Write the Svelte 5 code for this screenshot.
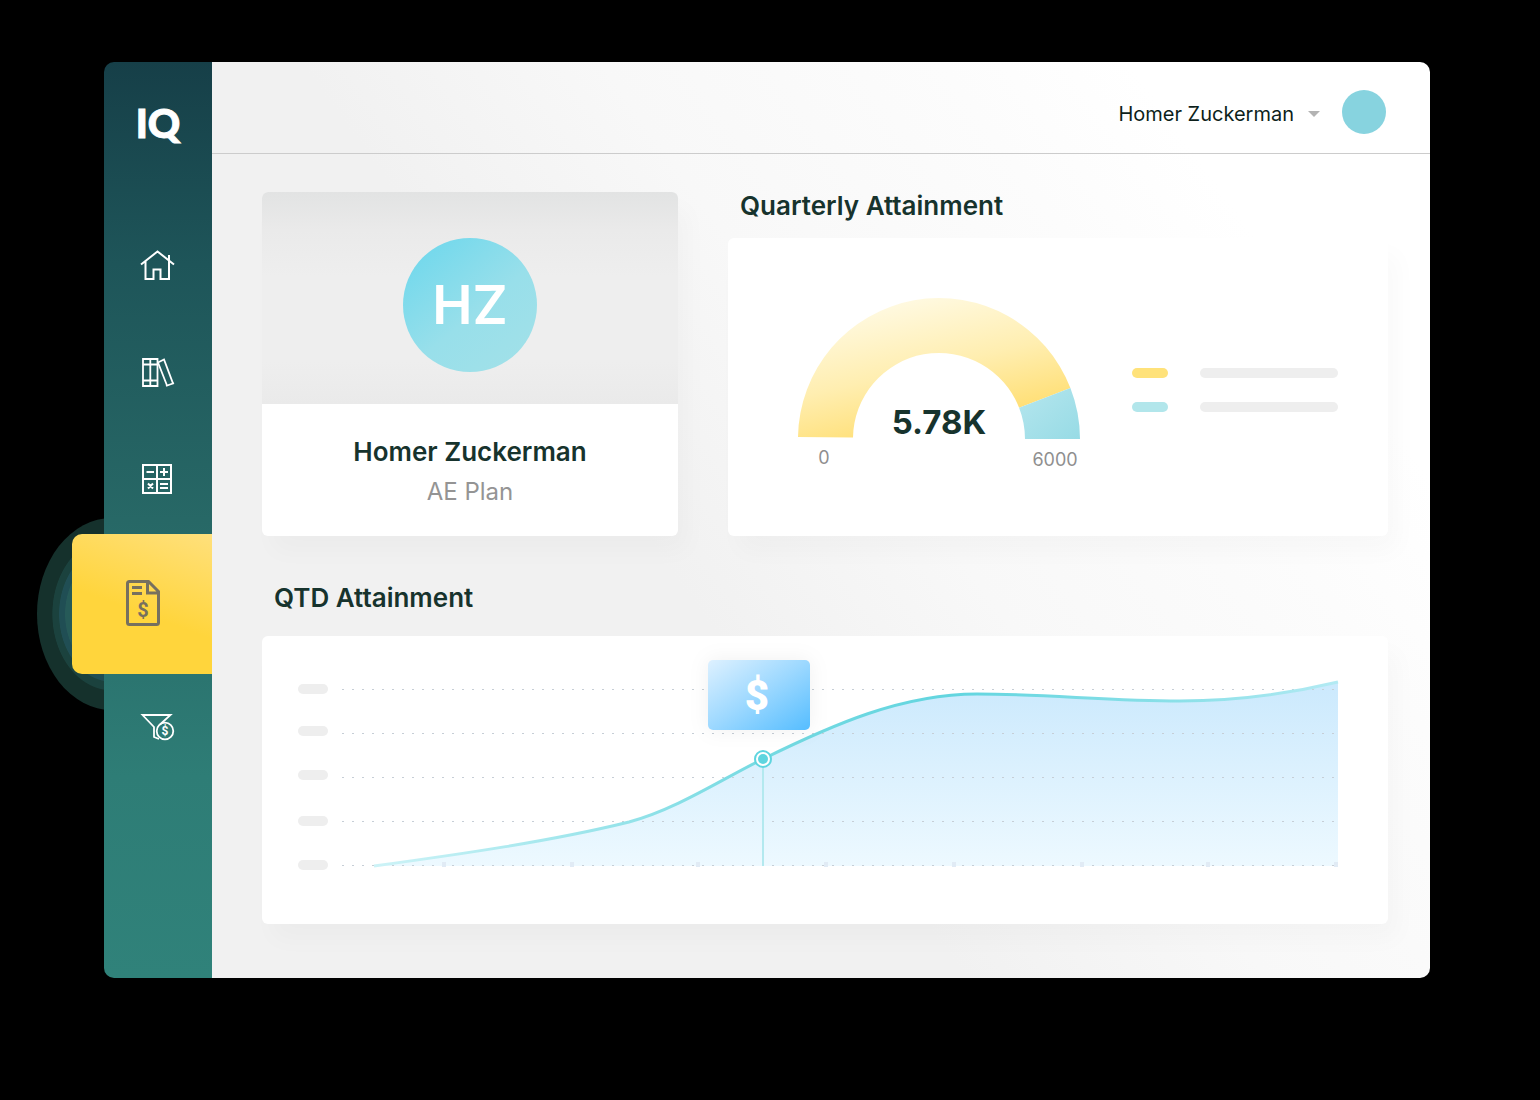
<script lang="ts">
    type Segment = { name: string, color: string };

    const user = { name: 'Homer Zuckerman', initials: 'HZ', plan: 'AE Plan' };

    const segments: Segment[] = [
        { name: 'Attained', color: '#ffe27a' },
        { name: 'Remaining', color: '#b2e6eb' },
    ];

    // y of the grid lines and of the labels beside them
    const gridLines = [53, 97, 141, 185, 229];
    const labels = [53, 95, 139, 185, 229];
    const ticks = [182, 310, 436, 564, 692, 820, 946, 1074];

    const curve = 'M112 230C200 218 290 205 367 186C415 173 460 143 501 123C570 89 640 58 715 58C780 58 850 65 918 65C980 65 1030 57 1076 46';
</script>

<div class="stage">
    <div class="app">
        <aside>
            <div class="logo">IQ</div>
            <nav>
                <a href="#home" aria-label="Home">
                    <svg width="36" height="36" viewBox="0 0 36 36">
                        <path d="M1 18.500L17.500 5.500L34 18.500M5.500 15.500V33H13.500V23.500H20.500V33H29V9" />
                    </svg>
                </a>
                <a href="#library" aria-label="Library">
                    <svg class="thin" width="36" height="36" viewBox="0 0 36 36">
                        <path d="M3 5H17.500V32H3ZM10.300 5V32M3 10.500H17.500M3 26.500H17.500" />
                        <path d="M18 8.500L24 5.500L33 29.500L27 31.500ZM26 32L34 29" />
                    </svg>
                </a>
                <a href="#calculator" aria-label="Calculator">
                    <svg width="36" height="36" viewBox="0 0 36 36">
                        <path d="M3 3H31V31H3ZM17 3V31M3 17H31M6.500 10H14M20 10H28M24 6V14M20 22H28M20 26H28M8 21.500L13 26.500M13 21.500L8 26.500" />
                    </svg>
                </a>
                <a class="active" href="#statements" aria-label="Statements" aria-current="page">
                    <svg width="38" height="48" viewBox="0 0 38 48">
                        <path d="M6.500 1.500H25.500L35.500 11.500V42.500Q35.500 44.500 33.500 44.500H6.500Q4.500 44.500 4.500 42.500V3.500Q4.500 1.500 6.500 1.500ZM24.500 2V13H35M9 7.500H19M9 13.500H19" />
                        <text x="20" y="37" font-size="20">$</text>
                    </svg>
                </a>
                <a href="#pipeline" aria-label="Pipeline">
                    <svg class="thin" width="36" height="36" viewBox="0 0 36 36">
                        <path d="M20 14.500L30.500 5H2.500L14 17V27L19 29" />
                        <circle cx="25" cy="21" r="8.300" />
                        <text x="25" y="25" font-size="12">$</text>
                    </svg>
                </a>
            </nav>
        </aside>

        <main>
            <header>
                <button class="user">
                    {user.name}
                    <svg width="12" height="6" viewBox="0 0 12 6"><path d="M0 0H12L6 6Z" /></svg>
                </button>
                <span class="dot"></span>
            </header>

            <div class="content">
                <div class="top">
                    <section class="card profile">
                        <div class="banner">
                            <div class="avatar">{user.initials}</div>
                        </div>
                        <div class="info">
                            <h3>{user.name}</h3>
                            <p>{user.plan}</p>
                        </div>
                    </section>

                    <section class="quarterly">
                        <h2>Quarterly Attainment</h2>
                        <div class="card gauge">
                            <svg viewBox="0 0 282 176">
                                <defs>
                                    <linearGradient id="gold" x1="0.25" y1="0" x2="0.7" y2="1">
                                        <stop offset="0" stop-color="#fffbe8" />
                                        <stop offset="0.5" stop-color="#ffeeb0" />
                                        <stop offset="1" stop-color="#ffda62" />
                                    </linearGradient>
                                    <linearGradient id="aqua" x1="0" y1="0" x2="1" y2="1">
                                        <stop offset="0" stop-color="#b5e6ee" />
                                        <stop offset="1" stop-color="#97dbe5" />
                                    </linearGradient>
                                </defs>
                                <path fill="url(#gold)" d="M0 139A141 141 0 0 1 272.400 90L221.100 109.700A86 86 0 0 0 55 139.500Z" />
                                <path fill="url(#aqua)" d="M272.400 90A141 141 0 0 1 282 141H227A86 86 0 0 0 221.100 109.700Z" />
                                <text class="value" x="141" y="136">5.78K</text>
                                <text class="bound" x="26" y="166">0</text>
                                <text class="bound" x="257" y="168">6000</text>
                            </svg>
                            <ul>
                                {#each segments as segment}
                                    <li aria-label={segment.name}>
                                        <i style="background:{segment.color}"></i>
                                        <b></b>
                                    </li>
                                {/each}
                            </ul>
                        </div>
                    </section>
                </div>

                <section class="qtd">
                    <h2>QTD Attainment</h2>
                    <div class="card">
                        <svg viewBox="0 0 1126 288">
                            <defs>
                                <linearGradient id="area" x1="0" y1="0" x2="0" y2="1">
                                    <stop offset="0" stop-color="#cbe9fd" />
                                    <stop offset="1" stop-color="#edf9ff" />
                                </linearGradient>
                                <linearGradient id="line" x1="0" y1="0" x2="1" y2="0">
                                    <stop offset="0" stop-color="#cdf3f7" />
                                    <stop offset="0.4" stop-color="#76dae2" />
                                    <stop offset="0.6" stop-color="#62d5df" />
                                    <stop offset="0.85" stop-color="#8ee1e9" />
                                    <stop offset="1" stop-color="#b3eaf3" />
                                </linearGradient>
                                <linearGradient id="tip" x1="0" y1="0" x2="1" y2="1">
                                    <stop offset="0" stop-color="#def1ff" />
                                    <stop offset="0.5" stop-color="#9cd8ff" />
                                    <stop offset="1" stop-color="#55bdff" />
                                </linearGradient>
                            </defs>
                            {#each labels as y}
                                <rect x="36" y={y - 5} width="30" height="10" rx="5" fill="#eee" />
                            {/each}
                            <path fill="url(#area)" d="{curve}V230Z" />
                            {#each gridLines as y}
                                <path class="grid" d="M80 {y + 0.5}H1076" />
                            {/each}
                            {#each ticks as x}
                                <rect x={x - 2} y="226" width="4" height="5" fill="#e1ebf5" />
                            {/each}
                            <path class="curve" d={curve} />
                            <path class="drop" d="M501 132V230" />
                            <circle cx="501" cy="123" r="8" fill="#fff" stroke="#5fd5df" stroke-width="2" />
                            <circle cx="501" cy="123" r="5" fill="#5fd5df" />
                            <g class="tip">
                                <rect x="446" y="24" width="102" height="70" rx="5" fill="url(#tip)" />
                                <text x="495" y="74">$</text>
                            </g>
                        </svg>
                    </div>
                </section>
            </div>
        </main>
    </div>
</div>

<style>
    :global(body) {
        background: #000;
    }
    .stage {
        padding: 62px 110px 122px 104px;
        font-family: Inter, "Noto Sans", sans-serif;
        color: #17332d;
        position: relative;
        z-index: 0;
    }
    .app {
        display: flex;
    }
    h2, h3, p, ul {
        margin: 0;
        padding: 0;
    }
    aside {
        flex: 0 0 108px;
        border-radius: 10px 0 0 10px;
        background: linear-gradient(#163f48, #1e5559 22%, #276866 50%, #2e7d76 78%, #30827a);
    }
    .logo {
        height: 148px;
        box-sizing: border-box;
        padding-top: 36px;
        color: #fff;
        font: 900 40px/50px Lato, sans-serif;
        -webkit-text-stroke: 1px #fff;
        text-align: center;
    }
    nav a {
        display: flex;
        align-items: center;
        justify-content: center;
        height: 108px;
    }
    nav svg {
        fill: none;
        stroke: #fff;
        stroke-width: 2;
    }
    nav svg.thin {
        stroke-width: 1.8;
    }
    nav text {
        fill: #fff;
        stroke: none;
        font-family: Roboto, sans-serif;
        font-weight: 700;
        text-anchor: middle;
    }
    nav a.active {
        position: relative;
        height: 140px;
        margin-left: -32px;
        border-radius: 10px 0 0 10px;
        background: linear-gradient(200deg, #ffe07c, #ffd53c 55%);
    }
    /* glow that spills out on the left, behind the sidebar */
    nav a.active::before {
        content: "";
        position: absolute;
        z-index: -1;
        left: -35px;
        top: -16px;
        width: 150px;
        height: 192px;
        border-radius: 50%;
        background: radial-gradient(closest-side, #265a58 62%, #204e54 63% 70%, #1b423e 71% 79%, #15312c 80%);
    }
    nav a.active svg {
        stroke: #76705f;
        stroke-width: 3;
    }
    nav a.active text {
        fill: #76705f;
    }
    main {
        flex: 1;
        min-width: 0;
        border-radius: 0 10px 10px 0;
        background: linear-gradient(54deg, #f1f1f1 40%, #f8f8f8 56%, #fcfcfc 74%, #fff 84%);
    }
    header {
        display: flex;
        align-items: center;
        justify-content: flex-end;
        gap: 22px;
        padding: 28px 44px 19px 50px;
        border-bottom: 1px solid #ccc;
    }
    .user {
        display: flex;
        align-items: center;
        gap: 14px;
        padding: 4px 0 0;
        border: 0;
        background: none;
        font: 400 20px/24px Inter, sans-serif;
        color: #0d1f1b;
    }
    .user svg {
        fill: #b3b3b3;
    }
    .dot {
        width: 44px;
        height: 44px;
        border-radius: 50%;
        background: #87d3df;
    }
    .content {
        padding: 38px 42px 54px 50px;
    }
    h2 {
        padding-left: 12px;
        font-size: 26px;
        font-weight: 600;
        line-height: 28px;
    }
    .card {
        background: #fff;
        border-radius: 6px;
        box-shadow: 10px 16px 24px rgba(0, 0, 0, 0.025);
    }
    .top {
        display: grid;
        grid-template-columns: 416fr 660fr;
        gap: 50px;
    }
    .banner {
        display: flex;
        align-items: center;
        justify-content: center;
        height: 212px;
        padding-top: 14px;
        box-sizing: border-box;
        border-radius: 6px 6px 0 0;
        background: linear-gradient(#e2e3e3, #eaeaea 18%, #eee 40%, #eee 80%, #eaeaea);
    }
    .avatar {
        width: 134px;
        border-radius: 50%;
        background: linear-gradient(140deg, #76d9ec 15%, #98dfea 55%, #a3e1e8);
        color: #fff;
        font-size: 54px;
        font-weight: 600;
        line-height: 134px;
        text-align: center;
    }
    .info {
        padding: 32px 0 28px;
        text-align: center;
    }
    h3 {
        font-size: 26px;
        font-weight: 600;
        line-height: 32px;
    }
    .info p {
        margin-top: 8px;
        font-size: 24px;
        line-height: 32px;
        color: #949494;
    }
    .gauge {
        display: flex;
        align-items: flex-start;
        justify-content: space-between;
        margin-top: 18px;
        padding: 60px 50px 62px 70px;
    }
    .gauge svg {
        width: 282px;
    }
    .gauge text {
        text-anchor: middle;
    }
    .value {
        fill: #17332d;
        font-size: 33px;
        font-weight: 700;
    }
    .bound {
        fill: #8f8f8f;
        font-size: 18px;
    }
    ul {
        display: grid;
        gap: 24px;
        padding-top: 70px;
        list-style: none;
    }
    li {
        display: flex;
        gap: 32px;
    }
    li i {
        width: 36px;
        height: 10px;
        border-radius: 5px;
    }
    li b {
        width: 138px;
        height: 10px;
        border-radius: 5px;
        background: #eee;
    }
    .qtd {
        margin-top: 48px;
    }
    .qtd .card {
        margin-top: 24px;
    }
    .qtd svg {
        display: block;
        width: 100%;
    }
    .grid {
        stroke: #c6ced6;
        stroke-dasharray: 2 8;
    }
    .curve {
        fill: none;
        stroke: url(#line);
        stroke-width: 3;
    }
    .drop {
        stroke: #b3e9ef;
        stroke-width: 2;
    }
    .tip rect {
        filter: drop-shadow(0 0 10px rgba(0, 0, 0, 0.06));
    }
    .tip text {
        fill: #fff;
        font: 900 42px Roboto, sans-serif;
        text-anchor: middle;
    }
</style>
